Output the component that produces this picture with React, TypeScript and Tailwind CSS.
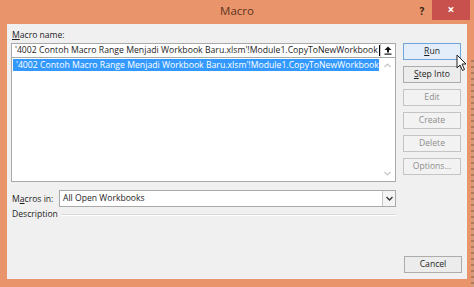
import type { ReactNode } from 'react'

function DlgButton({ children, disabled, isDefault }: { children: ReactNode; disabled?: boolean; isDefault?: boolean }) {
  return (
    <div
      className={`flex h-[17px] w-[58px] items-center justify-center border text-[8.6px] leading-none ${
        isDefault
          ? 'border-[#6ea6dc] bg-[#e3eefa] text-[#1e1e1e]'
          : disabled
            ? 'border-[#c4c4c4] bg-[#f2f2f2] text-[#8e8e8e]'
            : 'border-[#acacac] bg-[#ececec] text-[#1e1e1e]'
      }`}
    >
      {children}
    </div>
  )
}

function App() {
  const buttons = [
    { label: <><u className="underline-offset-1">R</u>un</>, isDefault: true },
    { label: <><u className="underline-offset-1">S</u>tep Into</> },
    { label: 'Edit', disabled: true },
    { label: 'Create', disabled: true },
    { label: 'Delete', disabled: true },
    { label: 'Options...', disabled: true },
  ]

  return (
    <div className="relative h-[287px] w-[474px] overflow-hidden bg-[#e9946a] font-['Open_Sans',sans-serif] text-[8.6px] text-[#1e1e1e]">
      {/* title bar */}
      <div className="flex h-[24px] items-start">
        <div className="w-[62px]" />
        <div className="flex-1 pt-[4px] text-center text-[11.5px] leading-[14px] text-[#5e3523]">Macro</div>
        <div className="flex w-[62px] items-start">
          <div className="w-[20px] pt-[5px] text-center text-[10px] font-bold leading-[12px] text-[#3a2417]">?</div>
          <div className="flex h-[20px] w-[38px] items-center justify-center bg-[#c9514d] text-[12px] font-bold leading-none text-white">
            ×
          </div>
        </div>
      </div>

      {/* client area */}
      <div className="mx-[7px] flex h-[255px] flex-col bg-[#f0f0f0] px-[4px] pb-[6px] pt-[5px]">
        <div className="flex gap-[7px]">
          <div className="flex w-[385px] flex-col">
            <div className="pl-[1px] leading-[12px]">
              <u className="underline-offset-1">M</u>acro name:
            </div>
            <div className="mt-[2px] flex h-[15px] border border-[#a9a9a9] bg-white">
              <div className="flex flex-1 items-center pl-[3px] text-[8.7px] leading-none whitespace-nowrap">
                '4002 Contoh Macro Range Menjadi Workbook Baru.xlsm'!Module1.CopyToNewWorkbook
                <span className="ml-[1px] inline-block h-[11px] w-px bg-black" />
              </div>
              <div className="flex w-[15px] items-center justify-center border-l border-[#c8c8c8]">
                <svg width="8" height="9" viewBox="0 0 8 9">
                  <path d="M4 0.5 L7.5 4 L5 4 L5 6.5 L3 6.5 L3 4 L0.5 4 Z" fill="#111" />
                  <rect x="0.5" y="7.5" width="7" height="1.2" fill="#111" />
                </svg>
              </div>
            </div>
            <div className="flex h-[124px] border border-t-0 border-[#a9a9a9] bg-white">
              <div className="flex-1 pt-px pl-px">
                <div className="flex h-[12px] w-[366px] items-center bg-[#3399ff] pl-[3px] text-[8.7px] leading-none whitespace-nowrap text-white">
                  '4002 Contoh Macro Range Menjadi Workbook Baru.xlsm'!Module1.CopyToNewWorkbook
                </div>
              </div>
              <div className="flex w-[16px] flex-col items-center justify-between py-[5px]">
                <svg width="7" height="5" viewBox="0 0 7 5">
                  <path d="M0.5 4 L3.5 1 L6.5 4" fill="none" stroke="#c6c6c6" strokeWidth="1.2" />
                </svg>
                <svg width="7" height="5" viewBox="0 0 7 5">
                  <path d="M0.5 1 L3.5 4 L6.5 1" fill="none" stroke="#c6c6c6" strokeWidth="1.2" />
                </svg>
              </div>
            </div>

            <div className="mt-[8px] flex items-center">
              <div className="w-[48px] pl-[1px] leading-[12px]">
                M<u className="underline-offset-1">a</u>cros in:
              </div>
              <div className="flex h-[17px] flex-1 border border-[#a9a9a9] bg-white">
                <div className="flex flex-1 items-center pl-[3px] leading-none">All Open Workbooks</div>
                <div className="flex w-[13px] items-center justify-center border-l border-[#c8c8c8] bg-[#f4f4f4]">
                  <svg width="7" height="5" viewBox="0 0 7 5">
                    <path d="M0.5 1 L3.5 4 L6.5 1" fill="none" stroke="#333" strokeWidth="1.3" />
                  </svg>
                </div>
              </div>
            </div>

            <div className="mt-px flex items-center">
              <div className="pl-[1px] leading-[12px]">Description</div>
              <div className="ml-[3px] flex-1 border-t border-[#dadada] shadow-[0_1px_0_#ffffff]" />
            </div>
          </div>

          <div className="flex w-[58px] flex-col gap-[6px] pt-[14px]">
            {buttons.map((b, i) => (
              <DlgButton key={i} disabled={b.disabled} isDefault={b.isDefault}>
                {b.label}
              </DlgButton>
            ))}
          </div>
        </div>

        <div className="flex-1" />

        <div className="flex justify-end pr-[1px]">
          <DlgButton>Cancel</DlgButton>
        </div>
      </div>

      {/* window behind, at the right edge */}
      <div className="absolute right-0 top-[60px] h-[227px] w-[3px] bg-[repeating-linear-gradient(180deg,#b27a5c_0px,#b27a5c_2px,#d89a78_2px,#d89a78_6px)]" />

      {/* mouse cursor */}
      <svg className="absolute left-[456px] top-[54px]" width="11" height="18" viewBox="0 0 11 18">
        <path d="M1 1 L1 14 L4 11 L6.5 16.5 L8.5 15.5 L6 10 L10 10 Z" fill="#fff" stroke="#222" strokeWidth="1" strokeLinejoin="round" />
      </svg>
    </div>
  )
}

export default App
